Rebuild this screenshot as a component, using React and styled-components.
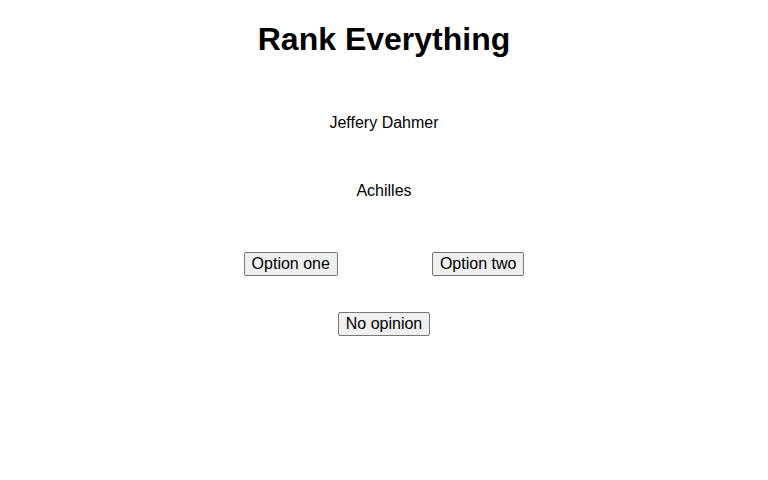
import styled, { createGlobalStyle } from 'styled-components';

const GlobalStyle = createGlobalStyle`
    body {
        margin: 0;
        background: #ffffff;
        font-family: "Liberation Sans", Arial, sans-serif;
        color: #000000;
    }
`;

const Page = styled.div`
    display: flex;
    flex-direction: column;
    align-items: center;
    padding-top: 21px;
`;

const Title = styled.h1`
    margin: 0;
    font-size: 32px;
    font-weight: bold;
    line-height: 37px;
`;

const Contender = styled.p`
    margin: ${props => props.gap}px 0 0;
    font-size: 16px;
    line-height: 18px;
`;

const ChoiceRow = styled.div`
    display: flex;
    gap: 94px;
    margin-top: ${props => props.gap}px;
`;

const Choice = styled.button`
    font-family: "Liberation Sans", Arial, sans-serif;
    font-size: 16px;
    line-height: 18px;
    color: #000000;
    background: #efefef;
    border: 1px solid #767676;
    border-radius: 2px;
    padding: 2px 7px;
    cursor: pointer;
    &:hover {
        background: #e5e5e5;
    }
`;

const App = () => {
    return (
        <>
            <GlobalStyle />
            <Page>
                <Title>Rank Everything</Title>
                <Contender gap={56}>Jeffery Dahmer</Contender>
                <Contender gap={50}>Achilles</Contender>
                <ChoiceRow gap={52}>
                    <Choice>Option one</Choice>
                    <Choice>Option two</Choice>
                </ChoiceRow>
                <ChoiceRow gap={36}>
                    <Choice>No opinion</Choice>
                </ChoiceRow>
            </Page>
        </>
    );
};

export default App;
